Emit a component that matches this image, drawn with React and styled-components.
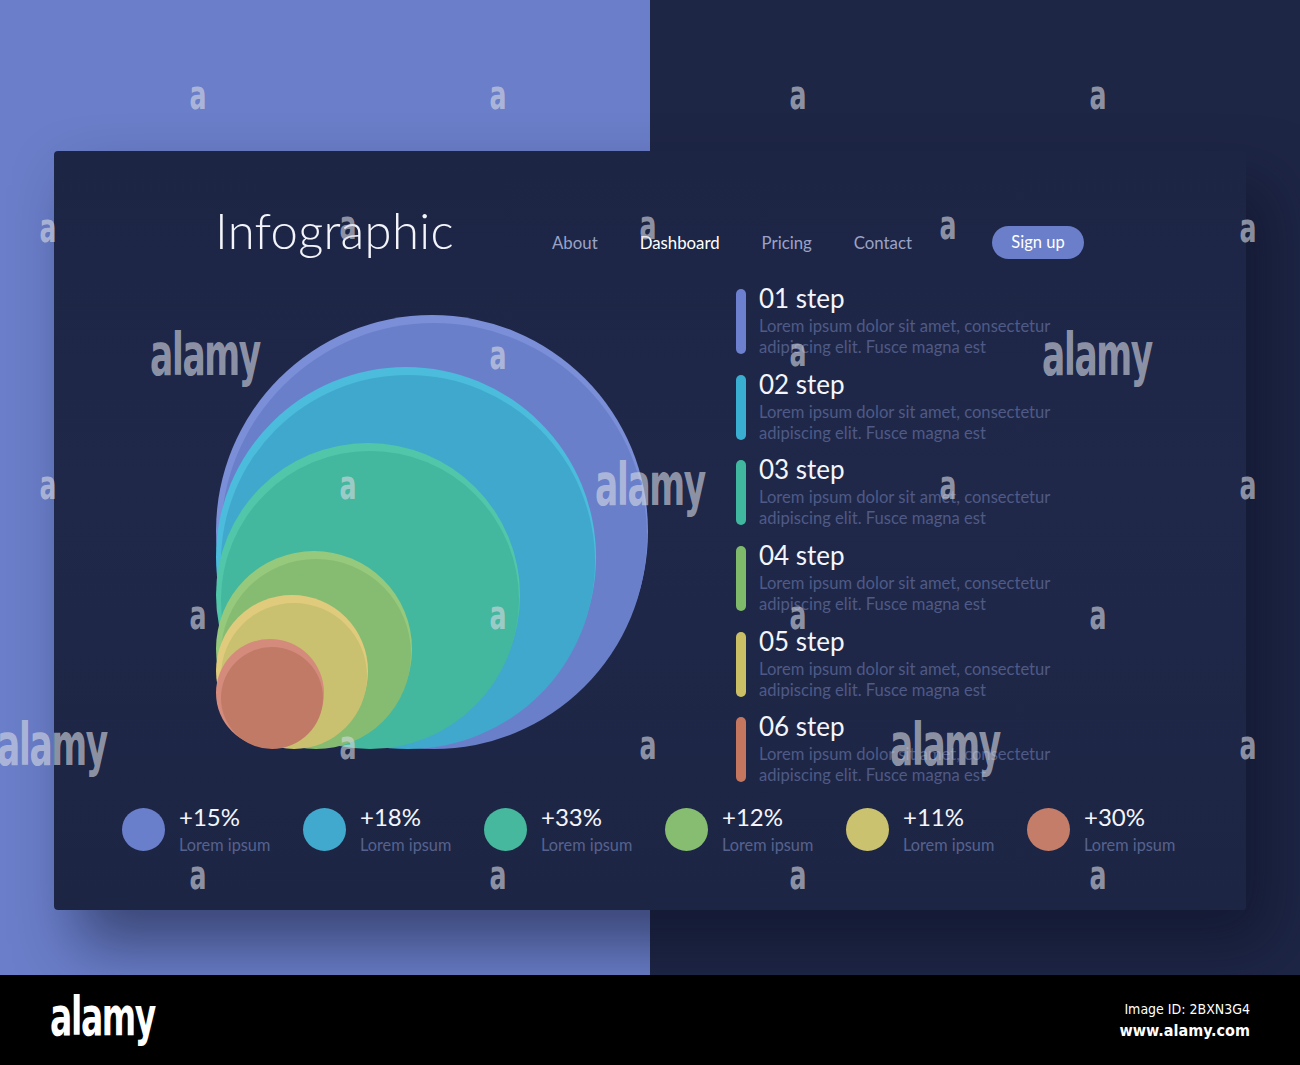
import React from "react";
import styled, { createGlobalStyle } from "styled-components";

const GlobalStyle = createGlobalStyle`
	html, body {
		margin: 0;
		padding: 0;
		background: #000;
	}
	body {
		font-family: "Lato", "Open Sans", sans-serif;
		-webkit-font-smoothing: antialiased;
	}
`;

const Stage = styled.div`
	position: relative;
	width: 1300px;
	height: 975px;
	overflow: hidden;
	background: linear-gradient(to right, #6a7ec9 0, #6a7ec9 650px, #1e2646 650px, #1e2646 100%);
	display: flex;
	align-items: flex-start;
`;

const Card = styled.div`
	margin: 151px 0 0 54px;
	width: 1192px;
	height: 759px;
	border-radius: 4px;
	background: linear-gradient(180deg, #1d2545 0%, #1f2849 45%, #1d2544 100%);
	box-shadow: 24px 34px 60px rgba(10, 14, 34, 0.5);
	display: flex;
	flex-direction: column;
`;

const Header = styled.header`
	margin-top: 58px;
	height: 52px;
	padding: 0 162px 0 161px;
	display: flex;
	align-items: center;
`;

const Title = styled.h1`
	margin: 0;
	font-weight: 300;
	font-size: 49px;
	line-height: 52px;
	letter-spacing: 0.3px;
	color: #f4f5fb;
	flex: 1;
	transform: translateY(-5px);
`;

const Nav = styled.nav`
	display: flex;
	align-items: center;
	gap: 42px;
	transform: translateY(7px);
`;

const NavLink = styled.a`
	font-size: 16.8px;
	color: ${(p) => (p.active ? "#ffffff" : "#9aa3c6")};
	text-decoration: none;
	cursor: pointer;
`;

const SignUp = styled.button`
	margin-left: 80px;
	width: 92px;
	height: 33px;
	border: none;
	border-radius: 17px;
	background: #6a7ec9;
	color: #ffffff;
	font-family: inherit;
	font-size: 16.5px;
	cursor: pointer;
	transform: translateY(7px);
`;

const Main = styled.section`
	height: 525px;
	display: flex;
	align-items: flex-start;
`;

const ChartBox = styled.div`
	margin: 45px 0 0 152px;
	width: 450px;
	height: 450px;
	svg {
		display: block;
	}
`;

const Steps = styled.ol`
	list-style: none;
	margin: 22px 0 0 80px;
	padding: 0;
	display: flex;
	flex-direction: column;
	gap: 10.7px;
`;

const Step = styled.li`
	display: flex;
	align-items: stretch;
	gap: 13px;
`;

const Bar = styled.span`
	width: 10px;
	margin: 6px 0 4px;
	border-radius: 5px;
	background: ${(p) => p.color};
`;

const StepText = styled.div`
	display: flex;
	flex-direction: column;
`;

const StepTitle = styled.h3`
	margin: 0;
	font-weight: 400;
	font-size: 26px;
	line-height: 30px;
	color: #f4f5fb;
`;

const StepBody = styled.p`
	margin: 3px 0 0;
	width: 330px;
	font-size: 16.6px;
	line-height: 21px;
	color: #4f5a86;
`;

const Legend = styled.ul`
	list-style: none;
	margin: 18px 0 0;
	padding: 0 0 0 68px;
	display: flex;
`;

const LegendItem = styled.li`
	width: 181px;
	display: flex;
	align-items: center;
	gap: 14px;
`;

const Dot = styled.span`
	width: 43px;
	height: 43px;
	border-radius: 50%;
	background: ${(p) => p.color};
	flex: none;
`;

const Value = styled.div`
	font-size: 24px;
	line-height: 26px;
	color: #f4f5fb;
`;

const Caption = styled.div`
	margin-top: 5px;
	font-size: 16.3px;
	line-height: 20px;
	color: #56628e;
`;

const Marks = styled.div`
	position: absolute;
	inset: 0;
	pointer-events: none;
`;

const Mark = styled.span`
	position: absolute;
	font-family: "Liberation Sans Narrow", "DejaVu Sans Condensed", "Liberation Sans", sans-serif;
	font-weight: 700;
	color: rgba(215, 218, 228, 0.62);
	line-height: 1;
	transform: translate(-50%, -50%) scaleX(${(p) => (p.big ? 0.66 : 0.7)});
	font-size: ${(p) => (p.big ? "58px" : "40px")};
	letter-spacing: ${(p) => (p.big ? "-2px" : "0")};
	white-space: nowrap;
`;

const Footer = styled.footer`
	width: 1300px;
	height: 90px;
	background: #000;
	display: flex;
	align-items: center;
	justify-content: space-between;
	padding: 0 50px;
	box-sizing: border-box;
`;

const Brand = styled.div`
	font-family: "Liberation Sans Narrow", "DejaVu Sans Condensed", "Liberation Sans", sans-serif;
	font-weight: 700;
	font-size: 54px;
	letter-spacing: -2px;
	color: #fff;
	transform: scaleX(0.68) translateY(-4px);
	transform-origin: left center;
`;

const Meta = styled.div`
	text-align: right;
	font-family: "DejaVu Sans Condensed", "Liberation Sans Narrow", sans-serif;
	color: #fff;
	font-size: 14px;
	line-height: 22px;
	b {
		font-size: 16px;
	}
`;

const circles = [
	{ r: 216, light: "#7b8fd8", dark: "#6a7fca" },
	{ r: 190, light: "#4bbcdb", dark: "#40a8cc" },
	{ r: 152, light: "#51c6a8", dark: "#44b79f" },
	{ r: 98, light: "#97c97c", dark: "#85bc72" },
	{ r: 76, light: "#e0cb7c", dark: "#c9c170" },
	{ r: 54, light: "#d48b7c", dark: "#c17a66" },
];

const steps = [
	{ n: "01", color: "#6d7fcf" },
	{ n: "02", color: "#3aaed0" },
	{ n: "03", color: "#3fb89f" },
	{ n: "04", color: "#7fba6a" },
	{ n: "05", color: "#cbbf65" },
	{ n: "06", color: "#c4765f" },
];

const legend = [
	{ v: "+15%", color: "#6a7fcb" },
	{ v: "+18%", color: "#41a9cd" },
	{ v: "+33%", color: "#45b89e" },
	{ v: "+12%", color: "#86bd70" },
	{ v: "+11%", color: "#cbc270" },
	{ v: "+30%", color: "#c47d68" },
];

// watermark grid, page coordinates of each glyph centre
const marks = [
	[198, 95], [498, 95], [798, 95], [1098, 95],
	[48, 228], [348, 225], [648, 225], [948, 225], [1248, 228],
	[205, 355, true], [498, 355], [798, 352], [1097, 355, true],
	[48, 485], [348, 485], [650, 485, true], [948, 485], [1248, 485],
	[198, 615], [498, 615], [798, 615], [1098, 615],
	[52, 745, true], [348, 745], [648, 745], [945, 745, true], [1248, 745],
	[198, 875], [498, 875], [798, 875], [1098, 875],
];

const BubbleChart = () => {
	const left = 216;
	const bottom = 747;
	return (
		<svg width="450" height="450" viewBox="206 306 450 450">
			{circles.map((c, i) => {
				const cx = left + c.r;
				const cy = bottom - c.r;
				return (
					<g key={i}>
						<circle cx={cx} cy={cy} r={c.r} fill={c.light} />
						<circle cx={cx + 2} cy={cy + 5} r={c.r - 3} fill={c.dark} />
					</g>
				);
			})}
		</svg>
	);
};

const App = () => {
	return (
		<>
			<GlobalStyle />
			<Stage>
				<Card>
					<Header>
						<Title>Infographic</Title>
						<Nav>
							<NavLink>About</NavLink>
							<NavLink active>Dashboard</NavLink>
							<NavLink>Pricing</NavLink>
							<NavLink>Contact</NavLink>
						</Nav>
						<SignUp>Sign up</SignUp>
					</Header>
					<Main>
						<ChartBox>
							<BubbleChart />
						</ChartBox>
						<Steps>
							{steps.map((s) => (
								<Step key={s.n}>
									<Bar color={s.color} />
									<StepText>
										<StepTitle>{s.n} step</StepTitle>
										<StepBody>
											Lorem ipsum dolor sit amet, consectetur adipiscing elit. Fusce magna est
										</StepBody>
									</StepText>
								</Step>
							))}
						</Steps>
					</Main>
					<Legend>
						{legend.map((l) => (
							<LegendItem key={l.v}>
								<Dot color={l.color} />
								<div>
									<Value>{l.v}</Value>
									<Caption>Lorem ipsum</Caption>
								</div>
							</LegendItem>
						))}
					</Legend>
				</Card>
				<Marks>
					{marks.map(([x, y, big], i) => (
						<Mark key={i} big={big} style={{ left: x, top: y }}>
							{big ? "alamy" : "a"}
						</Mark>
					))}
				</Marks>
			</Stage>
			<Footer>
				<Brand>alamy</Brand>
				<Meta>
					Image ID: 2BXN3G4
					<br />
					<b>www.alamy.com</b>
				</Meta>
			</Footer>
		</>
	);
};

export default App;
